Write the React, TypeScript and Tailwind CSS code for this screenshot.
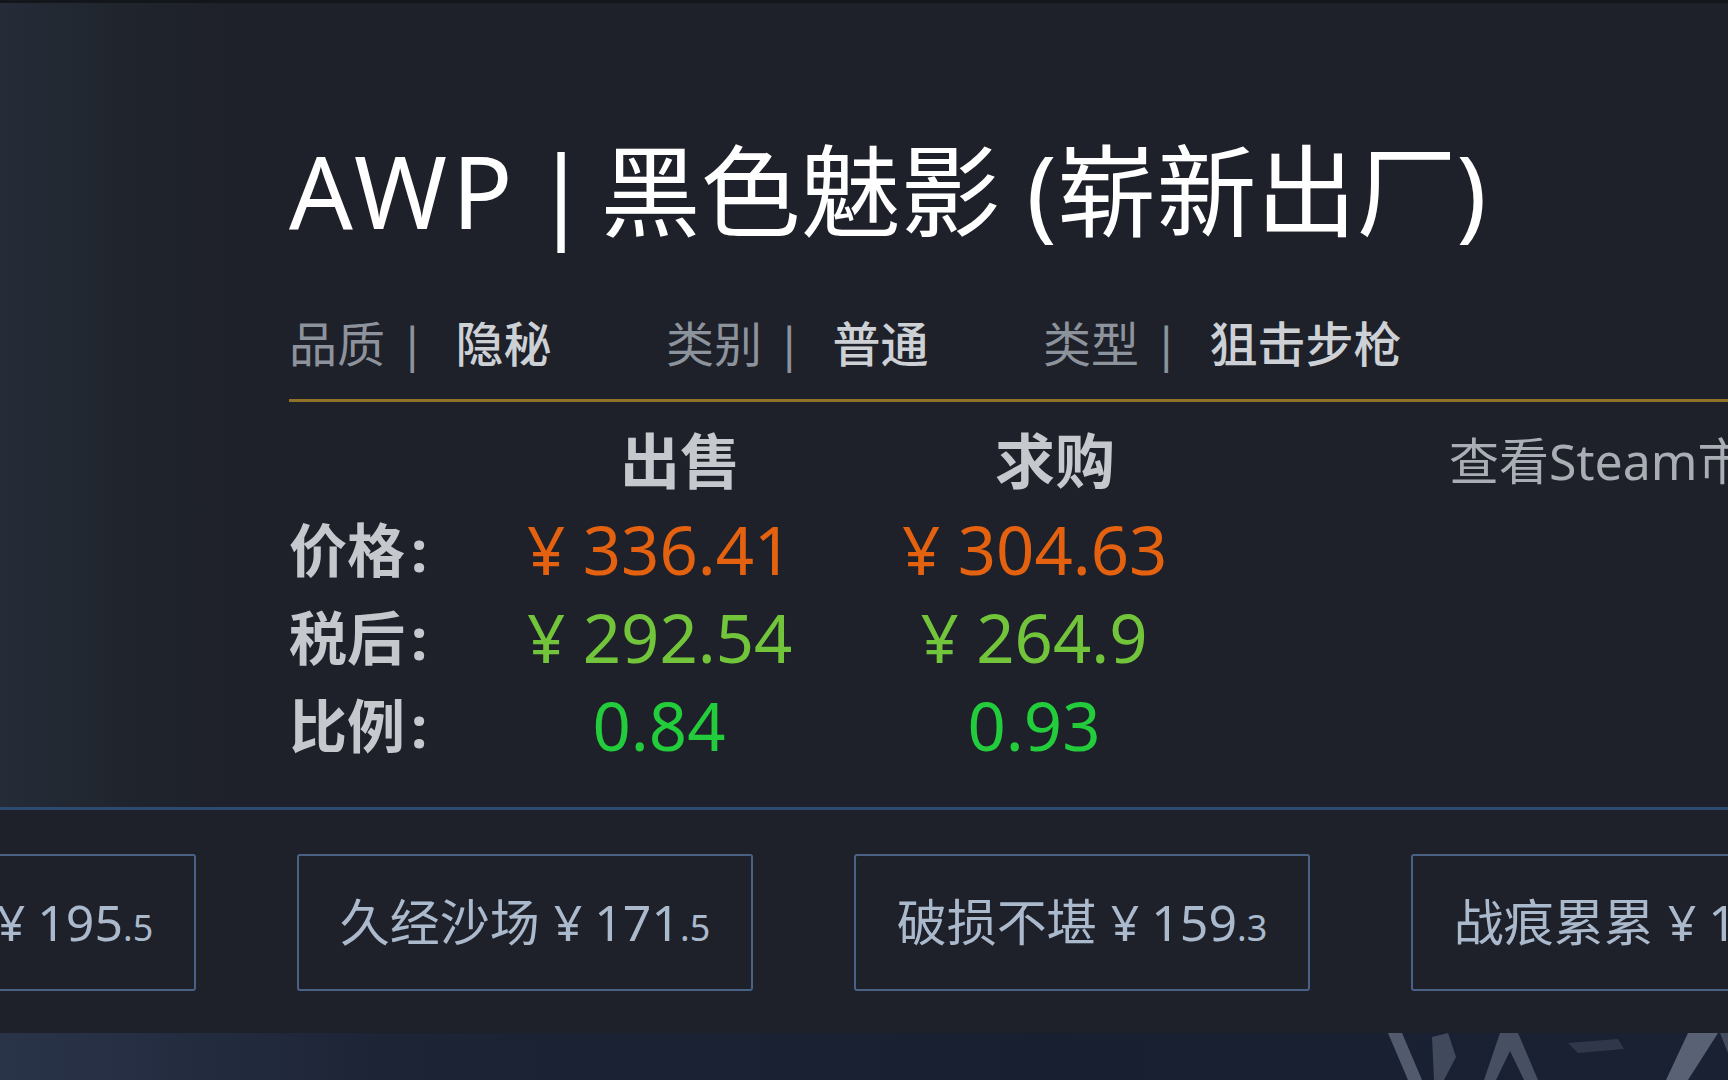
import React from 'react';

const FONT = { fontFamily: '"Noto Sans", "Noto Sans CJK SC", sans-serif' };

const specs = [
  { label: '品质', value: '隐秘' },
  { label: '类别', value: '普通' },
  { label: '类型', value: '狙击步枪' },
];

const rows = [
  { label: '价格', sell: '¥ 336.41', buy: '¥ 304.63', color: 'text-[#e4620f]' },
  { label: '税后', sell: '¥ 292.54', buy: '¥ 264.9', color: 'text-[#72c53b]' },
  { label: '比例', sell: '0.84', buy: '0.93', color: 'text-[#22cc3a]' },
];

const wears = [
  { name: '略有磨损', whole: '195', dec: '.5' },
  { name: '久经沙场', whole: '171', dec: '.5' },
  { name: '破损不堪', whole: '159', dec: '.3' },
  { name: '战痕累累', whole: '148', dec: '.2' },
];

function WearBox({ name, whole, dec }: { name: string; whole: string; dec: string }) {
  return (
    <div className="w-[456px] h-[137px] shrink-0 rounded-[3px] border-2 border-[#4a6186] flex items-center justify-center text-[#abb9cd] text-[50px] whitespace-nowrap">
      <span>{name}</span>
      <span className="ml-[14px]">¥</span>
      <span className="ml-[12px]">{whole}</span>
      <span className="text-[36px] mt-[10px]">{dec}</span>
    </div>
  );
}

export default function App() {
  return (
    <div className="w-[1728px] h-[1080px] overflow-hidden bg-[#1e2129] flex flex-col" style={FONT}>
      {/* upper panel */}
      <div className="h-[807px] flex flex-col bg-[linear-gradient(to_right,#252c38_0%,#20252d_7%,#1e2129_13%)]">
        <div className="h-[3px] bg-[#13161b]" />
        <div className="pl-[289px]">
          <h1 className="mt-[127px] flex items-center text-[100px] leading-[120px] text-white font-normal whitespace-nowrap">
            <span className="tracking-[5px]">AWP</span>
            <span className="ml-[16px]">|</span>
            <span className="ml-[12px]">黑色魅影 (崭新出厂)</span>
          </h1>

          <div className="mt-[64px] flex text-[48px] leading-[60px] whitespace-nowrap">
            {specs.map((s) => (
              <div key={s.label} className="w-[377px] flex items-center shrink-0">
                <span className="text-[#8d939c]">{s.label}</span>
                <span className="ml-[14px] text-[#8d939c]">|</span>
                <span className="ml-[30px] text-[#cdd1d6] font-medium">{s.value}</span>
              </div>
            ))}
          </div>

          <div className="mt-[25px] h-[3px] bg-[#8f7228]" />

          {/* price table */}
          <div className="mt-[27px] flex items-center h-[64px] whitespace-nowrap">
            <div className="w-[238px] shrink-0" />
            <div className="w-[264px] shrink-0 pl-[42px] text-center text-[60px] font-bold text-[#c5c9ce]">出售</div>
            <div className="ml-[111px] w-[264px] shrink-0 pl-[42px] text-center text-[60px] font-bold text-[#c5c9ce]">求购</div>
            <div className="ml-[283px] text-[50px] text-[#a9aeb4]">查看Steam市场</div>
          </div>

          <div className="mt-[12px] flex flex-col">
            {rows.map((r) => (
              <div key={r.label} className="flex items-center h-[88px] whitespace-nowrap">
                <div className="w-[238px] shrink-0 flex text-[58px] font-bold text-[#c5c9ce]">
                  <span>{r.label}</span>
                  <span className="ml-[6px]">:</span>
                </div>
                <div className={`w-[264px] shrink-0 text-center text-[67px] ${r.color}`}>{r.sell}</div>
                <div className={`ml-[111px] w-[264px] shrink-0 text-center text-[67px] ${r.color}`}>{r.buy}</div>
              </div>
            ))}
          </div>
        </div>
      </div>

      <div className="h-[3px] bg-[#2e4a72]" />

      {/* wear buttons */}
      <div className="mt-[44px] flex gap-[101px] -ml-[260px]">
        {wears.map((w) => (
          <WearBox key={w.name} {...w} />
        ))}
      </div>

      {/* background art strip */}
      <div className="mt-[42px] flex-1 relative bg-[linear-gradient(to_right,#2a3449_0%,#1d2436_22%,#181f31_60%,#1a2133_100%)]">
        <svg className="absolute right-0 top-0" width="340" height="47" viewBox="0 0 340 47">
          <polygon points="0,0 14,0 34,47 20,47" fill="#5d6679" opacity="0.85" />
          <polygon points="44,4 60,0 68,24 56,47 46,47" fill="#4b5468" opacity="0.8" />
          <polygon points="112,0 130,0 150,47 136,47 122,18 108,47 96,47" fill="#525b6f" opacity="0.8" />
          <polygon points="180,10 230,6 236,16 190,20" fill="#3a4256" opacity="0.7" />
          <polygon points="300,0 330,0 300,47 278,47" fill="#646d80" opacity="0.85" />
          <polygon points="332,0 340,0 340,20" fill="#4d5669" opacity="0.8" />
        </svg>
      </div>
    </div>
  );
}
